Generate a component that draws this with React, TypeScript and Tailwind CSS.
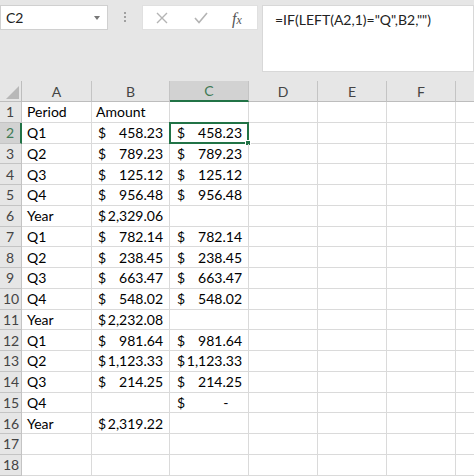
import React from "react";

type Row = { n: number; a?: string; b?: string; c?: string; plainB?: string; cDash?: boolean };

const rows: Row[] = [
  { n: 1, a: "Period", plainB: "Amount" },
  { n: 2, a: "Q1", b: "458.23", c: "458.23" },
  { n: 3, a: "Q2", b: "789.23", c: "789.23" },
  { n: 4, a: "Q3", b: "125.12", c: "125.12" },
  { n: 5, a: "Q4", b: "956.48", c: "956.48" },
  { n: 6, a: "Year", b: "2,329.06" },
  { n: 7, a: "Q1", b: "782.14", c: "782.14" },
  { n: 8, a: "Q2", b: "238.45", c: "238.45" },
  { n: 9, a: "Q3", b: "663.47", c: "663.47" },
  { n: 10, a: "Q4", b: "548.02", c: "548.02" },
  { n: 11, a: "Year", b: "2,232.08" },
  { n: 12, a: "Q1", b: "981.64", c: "981.64" },
  { n: 13, a: "Q2", b: "1,123.33", c: "1,123.33" },
  { n: 14, a: "Q3", b: "214.25", c: "214.25" },
  { n: 15, a: "Q4", cDash: true },
  { n: 16, a: "Year", b: "2,319.22" },
  { n: 17 },
  { n: 18 },
];

function Acc({ v }: { v?: string }) {
  if (!v) return null;
  return (
    <div className="flex w-full justify-between pl-[6px] pr-[6px]">
      <span>$</span>
      <span>{v}</span>
    </div>
  );
}

export default function App() {
  const font = { fontFamily: "Lato, 'Liberation Sans', sans-serif" };
  return (
    <div className="w-[474px] h-[476px] overflow-hidden bg-[#e6e6e6] text-[14px] text-black" style={font}>
      {/* Formula bar area */}
      <div className="relative h-[81px]">
        <div className="absolute left-0 top-[5px] w-[108px] h-[25px] bg-white border border-[#d0d0d0] flex items-center pl-[5px]">
          <span className="text-[14px] text-[#222]">C2</span>
          <span className="absolute right-[7px] top-[10px] w-0 h-0 border-l-[3.5px] border-r-[3.5px] border-t-[4px] border-l-transparent border-r-transparent border-t-[#777]" />
        </div>
        <div className="absolute left-[124px] top-[12px] flex flex-col gap-[2px]">
          <span className="w-[2px] h-[2px] bg-[#a0a0a0]" />
          <span className="w-[2px] h-[2px] bg-[#a0a0a0]" />
          <span className="w-[2px] h-[2px] bg-[#a0a0a0]" />
        </div>
        <div className="absolute left-[142px] top-[5px] w-[116px] h-[25px] bg-white border border-[#e0e0e0] flex items-center">
          <svg className="absolute left-[13px] top-[6px]" width="12" height="12" viewBox="0 0 12 12">
            <path d="M1 1 L11 11 M11 1 L1 11" stroke="#b4b4b4" strokeWidth="1.4" fill="none" />
          </svg>
          <svg className="absolute left-[51px] top-[6px]" width="14" height="12" viewBox="0 0 14 12">
            <path d="M1 6 L5 10.5 L13 1" stroke="#b4b4b4" strokeWidth="1.6" fill="none" />
          </svg>
          <span
            className="absolute left-[89px] top-[1px] text-[16px] italic text-[#555]"
            style={{ fontFamily: "'Liberation Serif', serif" }}
          >
            f<span className="text-[12px]">x</span>
          </span>
        </div>
        <div className="absolute left-[262px] top-[5px] w-[212px] h-[67px] bg-white border border-[#d8d8d8] pl-[12px] pt-[3px]">
          <span className="text-[14px] text-[#222]">=IF(LEFT(A2,1)="Q",B2,"")</span>
        </div>
      </div>

      {/* Grid */}
      <div className="bg-white">
        {/* header row */}
        <div className="flex h-[21px] bg-[#e6e6e6] text-[#444]">
          <div className="relative shrink-0 w-[22px] h-full border-r border-b border-[#bdbdbd]">
            <span
              className="absolute right-[2px] bottom-[2px] w-0 h-0"
              style={{ borderBottom: "13px solid #b8b8b8", borderLeft: "13px solid transparent" }}
            />
          </div>
          <div className="shrink-0 w-[70px] h-full border-r border-b border-[#c4c4c4] border-b-[#bdbdbd] flex items-center justify-center">A</div>
          <div className="shrink-0 w-[78px] h-full border-r border-b border-[#c4c4c4] border-b-[#bdbdbd] flex items-center justify-center">B</div>
          <div className="shrink-0 w-[79px] h-full bg-[#d2d2d2] border-r border-[#c4c4c4] border-b-2 border-b-[#217346] flex items-center justify-center text-[#3f7a55]">C</div>
          <div className="shrink-0 w-[69px] h-full border-r border-b border-[#c4c4c4] border-b-[#bdbdbd] flex items-center justify-center">D</div>
          <div className="shrink-0 w-[69px] h-full border-r border-b border-[#c4c4c4] border-b-[#bdbdbd] flex items-center justify-center">E</div>
          <div className="shrink-0 w-[69px] h-full border-r border-b border-[#c4c4c4] border-b-[#bdbdbd] flex items-center justify-center">F</div>
          <div className="shrink-0 w-[69px] h-full border-r border-b border-[#c4c4c4] border-b-[#bdbdbd]" />
        </div>
        {rows.map((r) => {
          const sel = r.n === 2;
          return (
            <div key={r.n} className="flex h-[20.75px]">
              <div
                className={
                  sel
                    ? "shrink-0 w-[22px] h-full bg-[#d2d2d2] border-r-2 border-r-[#217346] border-b border-b-[#c4c4c4] flex items-center pl-[4px] text-[#3f7a55]"
                    : "shrink-0 w-[22px] h-full bg-[#e6e6e6] border-r border-b border-[#c4c4c4] flex items-center pl-[4px] text-[#444]"
                }
              >
                <span className={r.n >= 10 ? "-ml-[1px]" : "ml-[2px]"}>{r.n}</span>
              </div>
              <div className="shrink-0 w-[70px] h-full border-r border-b border-[#dadada] flex items-center pl-[5px]">{r.a}</div>
              <div className="shrink-0 w-[78px] h-full border-r border-b border-[#dadada] flex items-center">
                {r.plainB ? <span className="pl-[4px]">{r.plainB}</span> : <Acc v={r.b} />}
              </div>
              <div className="relative shrink-0 w-[79px] h-full border-r border-b border-[#dadada] flex items-center">
                {r.cDash ? (
                  <div className="flex w-full pl-[7px]">
                    <span>$</span>
                    <span className="ml-[38px]">-</span>
                  </div>
                ) : (
                  <div className="w-full pl-[1px]">
                    <Acc v={r.c} />
                  </div>
                )}
                {sel && (
                  <div className="absolute -left-[1px] -top-[1px] w-[80px] h-[22px] border-2 border-[#217346]">
                    <span className="absolute -right-[4px] -bottom-[4px] w-[6px] h-[6px] bg-[#217346] border border-white" />
                  </div>
                )}
              </div>
              <div className="shrink-0 w-[69px] h-full border-r border-b border-[#dadada]" />
              <div className="shrink-0 w-[69px] h-full border-r border-b border-[#dadada]" />
              <div className="shrink-0 w-[69px] h-full border-r border-b border-[#dadada]" />
              <div className="shrink-0 w-[69px] h-full border-r border-b border-[#dadada]" />
            </div>
          );
        })}
      </div>
    </div>
  );
}
